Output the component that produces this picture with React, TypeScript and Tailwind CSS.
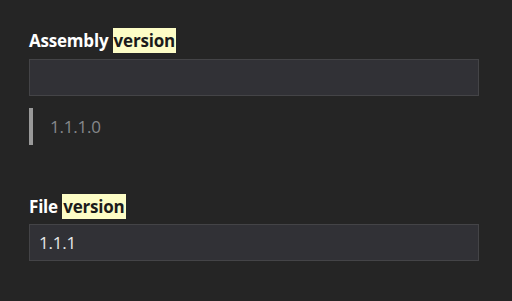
export default function App() {
  return (
    <main className="min-h-[301px] w-[512px] bg-[#252525] px-[29px] pt-[28px] font-['Open_Sans',sans-serif]">
      <label className="flex items-center text-[17px] font-bold text-white leading-[25px] tracking-[-0.2px]">
        Assembly&nbsp;<span className="bg-[#fdfdc6] text-[#1b1b1b] px-px">version</span>
      </label>
      <div className="mt-[6px] h-[37px] w-[450px] border border-[#444447] bg-[#313136]" />
      <div className="mt-[12px] flex h-[37px] items-center border-l-4 border-[#9a9a9a] pl-[17px] text-[17px] tracking-[-0.2px] text-[#86888b]">
        1.1.1.0
      </div>
      <label className="mt-[49px] flex items-center text-[17px] font-bold text-white leading-[25px] tracking-[-0.2px]">
        File&nbsp;<span className="bg-[#fdfdc6] text-[#1b1b1b] px-px">version</span>
      </label>
      <div className="mt-[5px] flex h-[37px] w-[450px] items-center border border-[#444447] bg-[#313136] px-[9px] text-[17px] tracking-[-0.2px] text-[#e8e8e8]">
        1.1.1
      </div>
    </main>
  );
}
